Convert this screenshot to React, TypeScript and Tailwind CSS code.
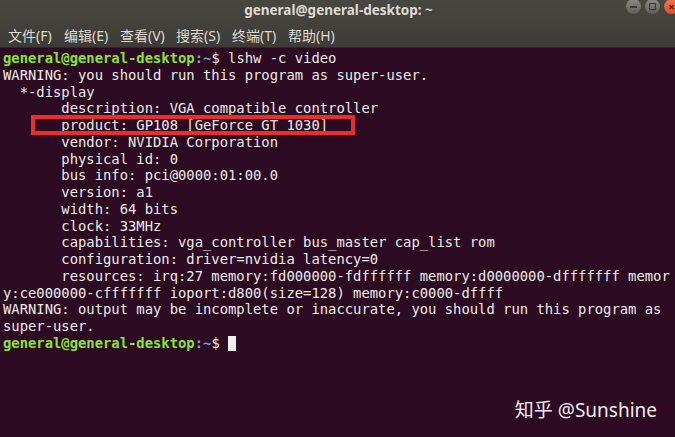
import React from 'react';

const mono = { fontFamily: '"DejaVu Sans Mono", "Liberation Mono", monospace' };

const output = [
  'WARNING: you should run this program as super-user.',
  '  *-display',
  '       description: VGA compatible controller',
  '       product: GP108 [GeForce GT 1030]',
  '       vendor: NVIDIA Corporation',
  '       physical id: 0',
  '       bus info: pci@0000:01:00.0',
  '       version: a1',
  '       width: 64 bits',
  '       clock: 33MHz',
  '       capabilities: vga_controller bus_master cap_list rom',
  '       configuration: driver=nvidia latency=0',
  '       resources: irq:27 memory:fd000000-fdffffff memory:d0000000-dfffffff memor',
  'y:ce000000-cfffffff ioport:d800(size=128) memory:c0000-dffff',
  'WARNING: output may be incomplete or inaccurate, you should run this program as',
  'super-user.',
];

const menus = ['文件(F)', '编辑(E)', '查看(V)', '搜索(S)', '终端(T)', '帮助(H)'];

function Prompt({ children }: { children?: React.ReactNode }) {
  return (
    <div className="whitespace-pre">
      <span className="font-bold text-[#8ae234]">general@general-desktop</span>
      <span className="font-bold text-[#7f9fd0]">:~</span>
      <span>$ </span>
      {children}
    </div>
  );
}

export default function App() {
  return (
    <div className="w-[675px] h-[437px] overflow-hidden flex flex-col bg-[#2c0a22]">
      {/* window chrome */}
      <div className="bg-gradient-to-b from-[#48473f] to-[#3c3b37] text-[#dfdbd2]">
        <div className="h-[21px] relative flex items-center justify-center">
          <span
            className="text-[13.5px] font-bold leading-none pl-[2px]"
            style={{ fontFamily: '"Noto Sans", "Open Sans", sans-serif' }}
          >
            general@general-desktop: ~
          </span>
          <div className="absolute right-[-4px] top-[-1px] flex items-center gap-[4px]">
            <div className="w-[15px] h-[15px] rounded-full bg-gradient-to-b from-[#8a8984] to-[#5f5e5a] flex items-center justify-center">
              <div className="w-[7px] h-[2px] bg-[#3c3b37]" />
            </div>
            <div className="w-[15px] h-[15px] rounded-full bg-gradient-to-b from-[#8a8984] to-[#5f5e5a] flex items-center justify-center">
              <div className="w-[7px] h-[7px] border border-[#3c3b37]" />
            </div>
            <div className="w-[15px] h-[15px] rounded-full bg-gradient-to-b from-[#f4714a] to-[#e04e25] flex items-center justify-center text-[#4a2010] text-[11px] font-bold leading-none">
              ×
            </div>
          </div>
        </div>
        <div
          className="h-[27px] flex items-center gap-[12px] pl-[8px] pt-[3px] text-[14px] border-b border-[#2a2926]"
          style={{ fontFamily: '"Noto Sans", "Noto Sans CJK SC", sans-serif' }}
        >
          {menus.map((m) => (
            <span key={m} className="w-[44px] whitespace-nowrap">
              {m}
            </span>
          ))}
        </div>
      </div>

      {/* terminal */}
      <div
        className="relative flex-1 pl-[3px] pt-[2px] text-[13.85px] leading-[16.75px] text-[#ecebe8]"
        style={mono}
      >
        <Prompt>lshw -c video</Prompt>
        {output.map((l, i) => (
          <div key={i} className="whitespace-pre">
            {l}
          </div>
        ))}
        <Prompt>
          <span className="inline-block w-[8px] h-[15px] bg-[#efefef] align-[-3px]" />
        </Prompt>

        {/* highlight box */}
        <div className="absolute left-[31px] top-[67px] w-[324px] h-[20px] border-[4px] border-[#e7302c]" />

        {/* watermark */}
        <div
          className="absolute right-[18px] bottom-[17px] text-[19px] leading-none text-[#f2eef0]"
          style={{ fontFamily: '"Noto Sans", "Noto Sans CJK SC", sans-serif' }}
        >
          知乎 @Sunshine
        </div>
      </div>
    </div>
  );
}
